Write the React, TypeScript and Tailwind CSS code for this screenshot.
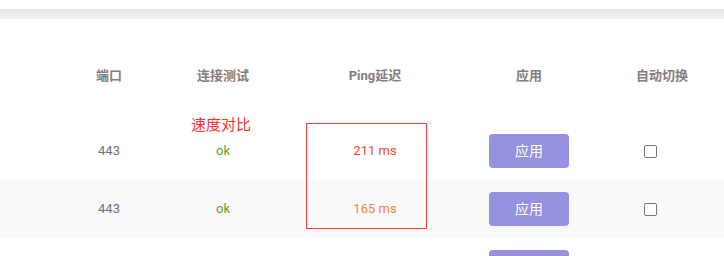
import React from "react";

const rows = [
  { port: "443", test: "ok", ping: "211 ms", pingColor: "text-[#f24a2c]", bg: "bg-white" },
  { port: "443", test: "ok", ping: "165 ms", pingColor: "text-[#f8823c]", bg: "bg-[#f8f9f9]" },
  { port: "", test: "", ping: "", pingColor: "", bg: "bg-white" },
];

export default function App() {
  const font = { fontFamily: 'Roboto, "Noto Sans CJK SC", sans-serif' };
  return (
    <div className="relative w-[724px] h-[256px] overflow-hidden bg-white" style={font}>
      <div className="h-[9px] bg-white" />
      <div className="h-[10px] bg-gradient-to-b from-[#e2e4e4] to-[#eff2f2]" />
      <div className="pt-[28px]">
        <div className="flex h-[58px] items-center text-[13px] font-bold text-[#857d7d]">
          <div className="w-[49px] shrink-0" />
          <div className="w-[120px] shrink-0 text-center">端口</div>
          <div className="w-[108px] shrink-0 text-center">连接测试</div>
          <div className="w-[196px] shrink-0 text-center">Ping延迟</div>
          <div className="w-[112px] shrink-0 text-center">应用</div>
          <div className="w-[154px] shrink-0 text-center">自动切换</div>
        </div>
        <div className="mt-[17px]">
          {rows.map((r, i) => (
            <div key={i} className={`flex h-[58px] items-center text-[13px] ${r.bg}`}>
              <div className="w-[49px] shrink-0" />
              <div className="w-[120px] shrink-0 text-center text-[#6e6e80]">{r.port}</div>
              <div className="w-[108px] shrink-0 text-center text-[#67a01c]">{r.test}</div>
              <div className={`w-[196px] shrink-0 text-center ${r.pingColor}`}>{r.ping}</div>
              <div className="w-[112px] shrink-0 flex justify-center">
                <button className="w-[80px] h-[34px] rounded-[4px] bg-[#9690e0] text-white text-[14px]">
                  {r.ping ? "应用" : ""}
                </button>
              </div>
              <div className="w-[154px] shrink-0 flex justify-center pr-[24px]">
                {r.ping && (
                  <div className="w-[13px] h-[13px] rounded-[2px] border border-[#767676] bg-white" />
                )}
              </div>
            </div>
          ))}
        </div>
      </div>
      <div className="absolute left-[191px] top-[114px] text-[15px] leading-[19px] text-[#ff3030]" style={{ fontFamily: '"Noto Sans CJK SC", sans-serif' }}>
        速度对比
      </div>
      <div className="absolute left-[306px] top-[123px] w-[121px] h-[106px] border border-[#ff3b3b]" />
    </div>
  );
}
